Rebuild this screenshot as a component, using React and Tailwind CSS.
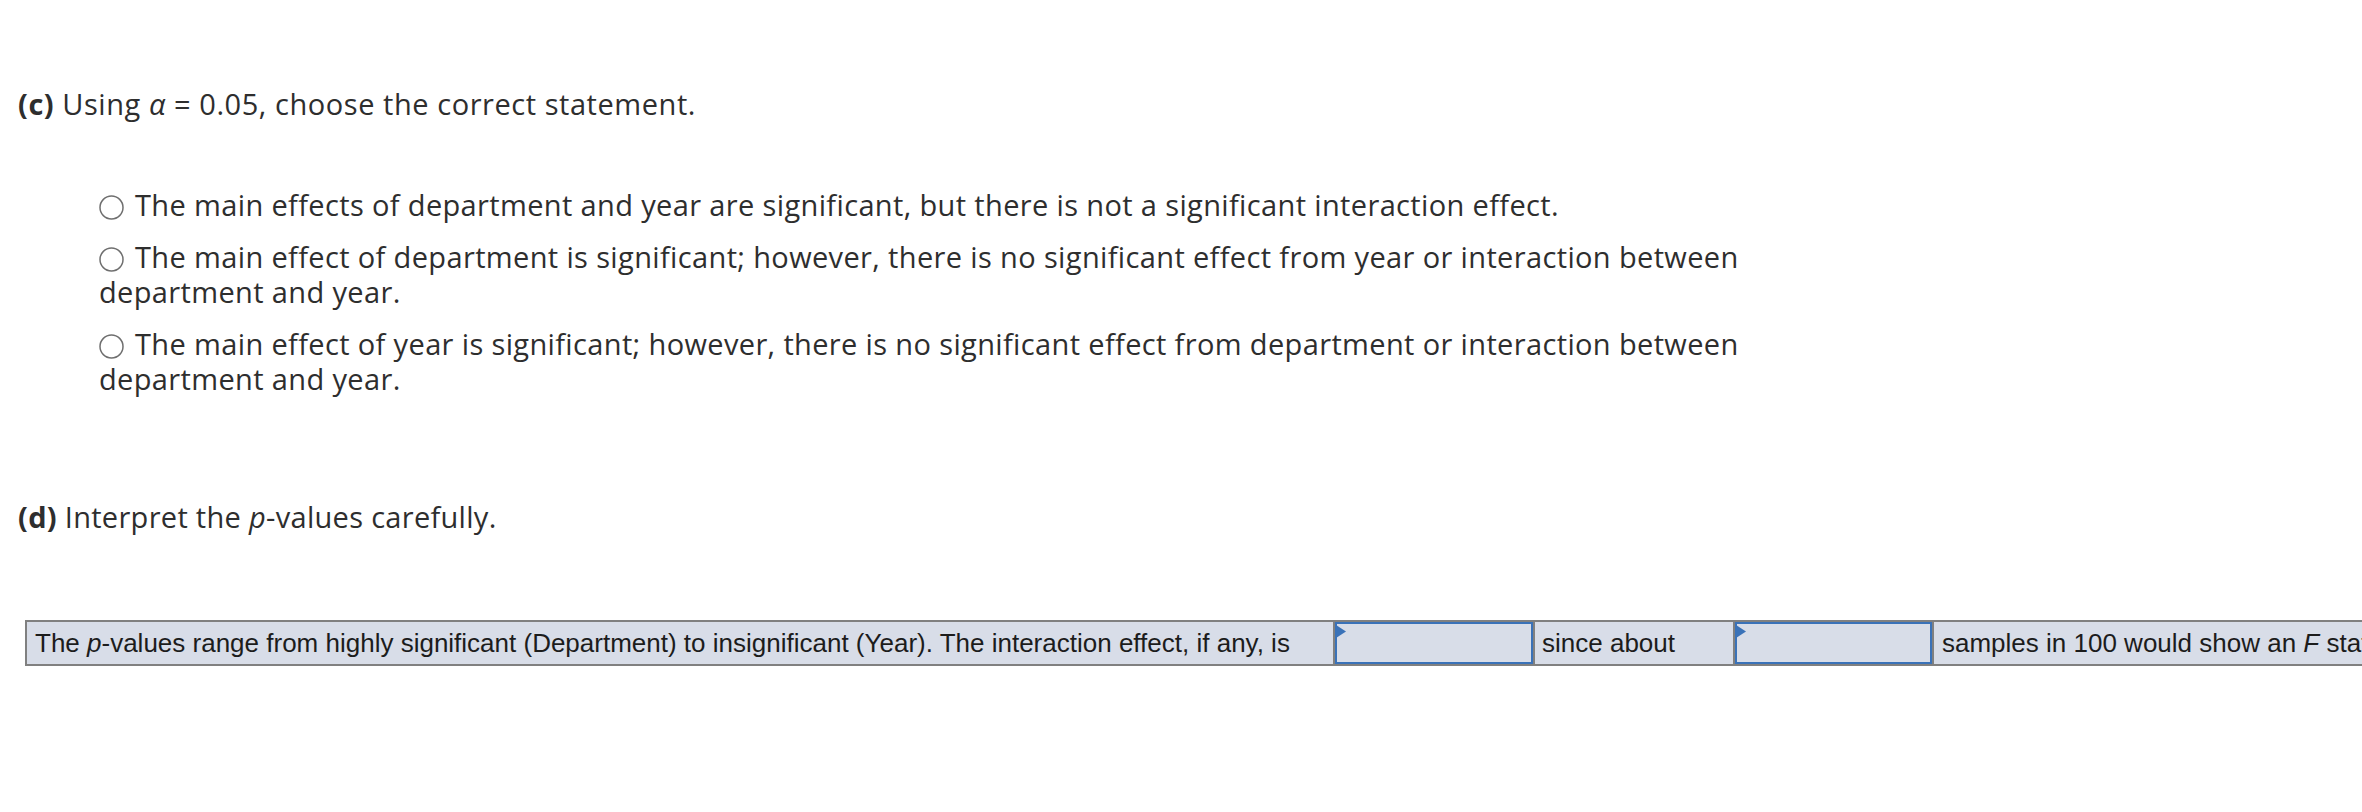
import React from 'react';

const Radio = () => (
    <svg width="25" height="25" viewBox="0 0 25 25" className="inline-block align-[-4px] mr-[11px]">
        <circle cx="12.5" cy="12.5" r="11.5" fill="#ffffff" stroke="#6f6f6f" strokeWidth="1.5" />
    </svg>
);

const Blank = ({ w }) => (
    <div className={`relative h-full shrink-0 border-l-2 border-[#808080] ${w}`}>
        <div className="h-full w-full border-2 border-[#3a72b8] bg-[#d8dde8]" />
        <svg width="10" height="13" viewBox="0 0 10 13" className="absolute left-[1px] top-[3px]">
            <polygon points="0,0 10,6.5 0,13" fill="#3a72b8" />
        </svg>
    </div>
);

const options = [
    'The main effects of department and year are significant, but there is not a significant interaction effect.',
    'The main effect of department is significant; however, there is no significant effect from year or interaction between department and year.',
    'The main effect of year is significant; however, there is no significant effect from department or interaction between department and year.',
];

export default function App() {
    return (
        <div className="w-[2362px] h-[812px] overflow-hidden bg-white">
            <div className="pl-[18px] pt-[86px] text-[29px] leading-[35px] text-[#2e2e2e]" style={{ fontFamily: '"Open Sans", "Noto Sans", sans-serif' }}>
                {/* part (c) */}
                <p className="tracking-[0.55px]">
                    <b>(c)</b> Using <i>α</i> = 0.05, choose the correct statement.
                </p>

                <div className="ml-[81px] mt-[66px] w-[1745px] flex flex-col gap-[17px] tracking-[0.36px]">
                    {options.map((o, i) => (
                        <label key={i} className="block">
                            <Radio />
                            {o}
                        </label>
                    ))}
                </div>

                {/* part (d) */}
                <p className="mt-[103px] tracking-[0.3px]">
                    <b>(d)</b> Interpret the <i>p</i>-values carefully.
                </p>
            </div>

            <div className="mt-[86px] ml-[25px] flex h-[46px] w-max border-2 border-[#808080] bg-[#d8dde8] text-[26px] text-[#1c1c1c] whitespace-nowrap" style={{ fontFamily: '"Liberation Sans", Arial, sans-serif' }}>
                <div className="flex w-[1306px] shrink-0 items-center pl-[8px]">
                    <span>The <i>p</i>-values range from highly significant (Department) to insignificant (Year). The interaction effect, if any, is</span>
                </div>
                <Blank w="w-[200px]" />
                <div className="flex w-[200px] shrink-0 items-center border-l-2 border-[#808080] pl-[7px]">since about</div>
                <Blank w="w-[199px]" />
                <div className="flex w-[900px] shrink-0 items-center border-l-2 border-[#808080] pl-[8px]">
                    <span>samples in 100 would show an <i>F</i> statistic this large by chance alone.</span>
                </div>
            </div>
        </div>
    );
}
